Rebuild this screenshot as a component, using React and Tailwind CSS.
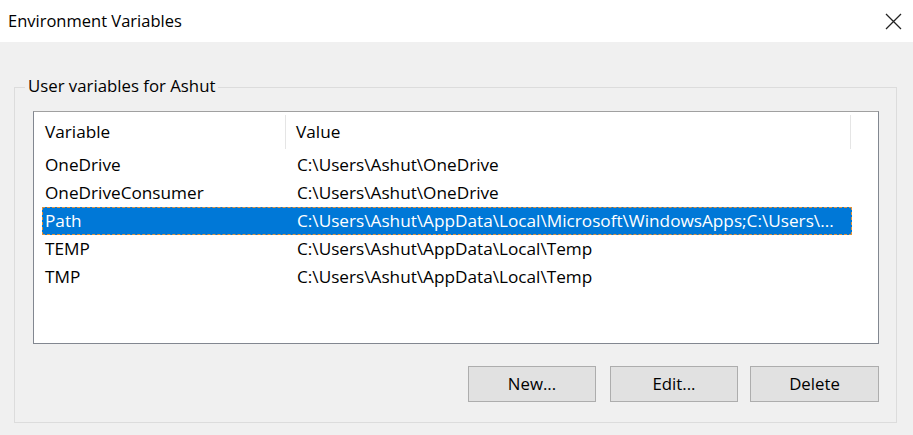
import React from "react";

const rows = [
  ["OneDrive", "C:\\Users\\Ashut\\OneDrive"],
  ["OneDriveConsumer", "C:\\Users\\Ashut\\OneDrive"],
  ["Path", "C:\\Users\\Ashut\\AppData\\Local\\Microsoft\\WindowsApps;C:\\Users\\..."],
  ["TEMP", "C:\\Users\\Ashut\\AppData\\Local\\Temp"],
  ["TMP", "C:\\Users\\Ashut\\AppData\\Local\\Temp"],
];

export default function App() {
  return (
    <div
      className="w-[913px] h-[435px] bg-[#f0f0f0] text-[16.8px] text-black overflow-hidden flex flex-col"
      style={{ fontFamily: '"Open Sans", "Noto Sans", sans-serif' }}
    >
      <div className="h-[42px] bg-white flex items-center justify-between pl-[8px] pr-[11px] shrink-0">
        <span className="leading-none text-[16.5px]">Environment Variables</span>
        <svg width="17" height="17" viewBox="0 0 17 17" className="text-[#222]">
          <path d="M1 1 L16 16 M16 1 L1 16" stroke="currentColor" strokeWidth="1.3" />
        </svg>
      </div>
      <div className="pl-[14px] pr-[16px] pt-[45px]">
        <div className="relative border border-[#dcdcdc] h-[336px] pl-[18px] pr-[17px] pt-[23px]">
          <span className="absolute left-[10px] top-[-12px] bg-[#f0f0f0] px-[3px] leading-[20px]">
            User variables for Ashut
          </span>
          <div className="h-[233px] bg-white border border-[#828790] border-t-[#a0a0a0] text-[17.2px]">
            <div className="h-[39px] flex items-center relative">
              <div className="w-[252px] pl-[11px] h-[34px] flex items-center border-r border-[#e5e5e5]">Variable</div>
              <div className="w-[565px] pl-[10px] h-[34px] flex items-center border-r border-[#e5e5e5]">Value</div>
            </div>
            <div className="flex flex-col">
              {rows.map(([k, v]) => {
                const sel = k === "Path";
                return (
                  <div key={k} className="h-[28px] flex pl-[8px]">
                    <div
                      className={
                        sel
                          ? "w-[810px] flex items-center bg-[#0078d7] text-white border border-dashed border-[#e0913a]"
                          : "w-[810px] flex items-center border border-transparent"
                      }
                    >
                      <div className="w-[254px] pl-[2px] whitespace-nowrap">{k}</div>
                      <div className="whitespace-nowrap">{v}</div>
                    </div>
                  </div>
                );
              })}
            </div>
          </div>
          <div className="flex justify-end mt-[22px]">
            <button className="w-[128px] h-[36px] bg-[#e1e1e1] border border-[#adadad] flex items-center justify-center">New...</button>
            <button className="ml-[14px] w-[128px] h-[36px] bg-[#e1e1e1] border border-[#adadad] flex items-center justify-center">Edit...</button>
            <button className="ml-[12px] w-[129px] h-[36px] bg-[#e1e1e1] border border-[#adadad] flex items-center justify-center">Delete</button>
          </div>
        </div>
      </div>
    </div>
  );
}
